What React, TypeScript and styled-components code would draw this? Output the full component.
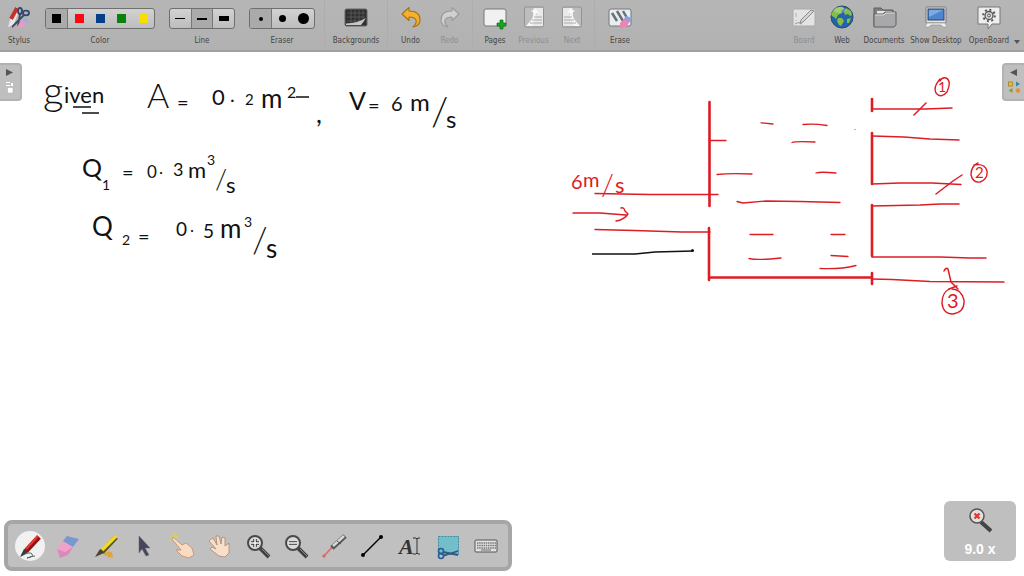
import React from 'react';
import styled, { createGlobalStyle } from 'styled-components';

const GlobalStyle = createGlobalStyle`
  *, *::before, *::after { box-sizing: border-box; }
  body { margin: 0; background: #fff; }
  button { font: inherit; color: inherit; border: 0; padding: 0; background: none; }
`;

const Page = styled.div`
  min-height: 100vh;
  display: flex;
  flex-direction: column;
  font-family: 'DejaVu Sans Condensed', 'DejaVu Sans', sans-serif;
  font-size: 8px;
  color: #454545;
`;

const Toolbar = styled.header`
  display: flex;
  height: 52px;
  background: linear-gradient(#b6b6b6, #b1b1b1);
  border-bottom: 2px solid #a0a0a0;
`;

const ToolGroup = styled.div<{ $divided?: boolean; $end?: boolean }>`
  display: flex;
  padding: 0 3px;
  margin-left: ${p => (p.$end ? 'auto' : '0')};
  border-left: ${p => (p.$divided ? '1px solid #adadad' : '0')};
`;

const Tool = styled.button<{ $width?: number }>`
  width: ${p => p.$width ?? 38}px;
  display: flex;
  flex-direction: column;
  align-items: center;
  gap: 6px;
  padding-top: 5px;
  line-height: 10px;
  white-space: nowrap;
  &:disabled { color: #8e8e8e; }
  svg { display: block; flex: none; }
`;

const Palettes = styled.div`
  display: flex;
  gap: 14px;
  padding: 8px 9px 0 7px;
`;

const Palette = styled.div`
  display: flex;
  flex-direction: column;
  align-items: center;
  gap: 7px;
  line-height: 10px;
`;

const Segments = styled.div<{ $width: number }>`
  display: flex;
  width: ${p => p.$width}px;
  height: 21px;
  border: 1px solid #6f6f6f;
  border-radius: 3px;
  overflow: hidden;
  background: linear-gradient(#d2d2d2, #bdbdbd);
`;

const Segment = styled.button<{ $on?: boolean; $line?: boolean }>`
  flex: 1;
  display: grid;
  place-items: center;
  background: ${p => (p.$on ? '#aaa' : 'transparent')};
  border-right: ${p => (p.$on || p.$line ? '1px solid #777' : '0')};
  &:last-child { border-right: 0; }
`;

const Mark = styled.span<{ $w: number; $h: number; $color?: string; $round?: boolean }>`
  width: ${p => p.$w}px;
  height: ${p => p.$h}px;
  background: ${p => p.$color ?? '#000'};
  border-radius: ${p => (p.$round ? '50%' : '0')};
`;

const MenuArrow = styled.button`
  align-self: flex-end;
  width: 8px;
  margin-bottom: 3px;
`;

const Board = styled.main`
  position: relative;
  flex: 1;
  display: flex;
  justify-content: space-between;
  align-items: flex-start;
  background: #fff;
  svg { flex: none; display: block; }
`;

const SideTab = styled.button<{ $side: 'left' | 'right' }>`
  position: absolute;
  top: 11px;
  ${p => p.$side}: 0;
  width: 22px;
  height: 38px;
  background: #bfbfbf;
  border: 2px solid #b2b2b2;
  border-${p => p.$side}: 0;
  border-radius: ${p => (p.$side === 'left' ? '0 4px 4px 0' : '4px 0 0 4px')};
  display: grid;
  place-items: center;
`;

const Footer = styled.footer`
  display: flex;
  justify-content: space-between;
  align-items: flex-end;
  padding: 0 8px 5px 4px;
`;

const Dock = styled.nav`
  display: flex;
  height: 51px;
  padding: 0 3px;
  background: #c0c0c0;
  border: 4px solid #a6a6a6;
  border-radius: 8px;
`;

const DockTool = styled.button`
  width: 38px;
  display: grid;
  place-items: center;
`;

const ZoomButton = styled.button`
  width: 72px;
  height: 60px;
  margin-bottom: 10px;
  border-radius: 6px;
  background: #bfbfbf;
  display: flex;
  flex-direction: column;
  align-items: center;
  justify-content: space-between;
  padding: 6px 0 4px;
`;

const ZoomValue = styled.span`
  font: bold 14px/16px 'Liberation Sans', sans-serif;
  color: #fff;
`;

const Ink = styled.text`
  font-family: Lato, 'Open Sans', sans-serif;
  font-weight: 400;
`;

/* Every glyph of a written line: text, x, baseline, size. */
type Glyph = [string, number, number, number];

const Written = ({ glyphs, color = '#111' }: { glyphs: Glyph[]; color?: string }) => (
  <Ink fill={color}>
    {glyphs.map(([t, x, y, size], i) => (
      <tspan key={i} x={x} y={y} fontSize={size} fontWeight={t === '/' || size > 30 ? 300 : 400}>{t}</tspan>
    ))}
  </Ink>
);

const given: Glyph[] = [['g', 43, 105, 40], ['iven', 64, 103, 22]];
const area: Glyph[] = [['A', 147, 108, 34], ['=', 177, 110, 20], ['0', 212, 105, 22], ['.', 230, 102, 20], ['2', 245, 105, 15], ['m', 261, 108, 26], ['2', 287, 98, 16], [',', 316, 123, 26]];
const speed: Glyph[] = [['V', 349, 110, 25], ['=', 368, 113, 20], ['6', 391, 111, 20], ['m', 410, 111, 24], ['/', 431, 126, 40], ['s', 446, 128, 24]];
const flowOne: Glyph[] = [['Q', 82, 177, 25], ['1', 102, 190, 14], ['=', 122, 180, 20], ['0', 147, 178, 17], ['.', 159, 174, 17], ['3', 173, 176, 18], ['m', 188, 178, 22], ['3', 207, 165, 14], ['/', 215, 189, 28], ['s', 226, 193, 22]];
const flowTwo: Glyph[] = [['Q', 92, 236, 26], ['2', 122, 245, 14], ['=', 138, 244, 20], ['0', 176, 236, 19], ['.', 190, 232, 17], ['5', 203, 238, 19], ['m', 220, 238, 26], ['3', 244, 227, 14], ['/', 252, 253, 36], ['s', 266, 258, 26]];
const inflow: Glyph[] = [['6', 571, 189, 20], ['m', 583, 187, 20], ['/', 601, 195, 30], ['s', 615, 193, 22]];

const RED = '#dd1c24';

const Notes = () => (
  <svg width="480" height="240" viewBox="0 52 480 240" role="img" aria-label="Given values">
    <Written glyphs={given} />
    <Written glyphs={area} />
    <Written glyphs={speed} />
    <Written glyphs={flowOne} />
    <Written glyphs={flowTwo} />
    <path d="M73 107H91M82 113H99M296 97L309 97" stroke="#111" strokeWidth="1.5" fill="none" />
  </svg>
);

const Diagram = () => (
  <svg width="464" height="270" viewBox="560 52 464 270" role="img" aria-label="Tank with one inlet and three outlets">
    <g stroke={RED} fill="none" strokeLinecap="round" strokeLinejoin="round">
      <path strokeWidth="2.6" d="M709.500 102V206M709 228V280M711 277.500H871M872 99V111M872 133V184M872 205V256M872 273V284" />
      <path strokeWidth="1.3" d="M709 140.500H726M717 174.500Q730 173 752 174M761 122.800L773 124M792 142.500Q796 141 815 142M803 124.500Q814 123.500 827 125.500M816 173Q820 171.500 836 173M737 201.500L743 203L766 201L800 201.500L840 202.500M750 234.500H773M749 258.500Q757 260.500 781 258M831 234.500H845M831 255.500L848 256.500M820 268.500Q840 269.500 856 265.500" />
      <path strokeWidth="1.4" d="M595 193.500L650 194.500H718M595 229.500L634 230.500L682 232H710M573 213L600 213L626 215M621 208Q624 207 625 211L628 214Q624 220 616 221" />
      <path strokeWidth="1.5" d="M872 109L925 109L952 108M872 136L904 137L930 139L959 140M872 184L900 183H932L961 184.500M872 206L920 205L940 204H959M872 257L940 257L970 258L986 258M872 279L892 279.500L930 281.500L1004 282" />
      <path strokeWidth="1.5" d="M926 103L921 108L914 115M962 175L953 181L936 194M944 271Q946 267 948 269L951 282L958 289M949 289L957 286" />
      <path strokeWidth="1.4" d="M940 79Q933 87 936 93Q941 99 947 92Q952 81 946 78Q942 77 940 81M978 163Q971 166 971 175Q973 183 980 182Q988 179 987 171Q985 163 974 165M949 289Q942 293 942 303Q943 314 953 314Q965 312 964 300Q961 289 952 289" />
    </g>
    <path d="M592 254H635L655 252L693 251" stroke="#111" strokeWidth="1.6" fill="none" />
    <circle cx="692.500" cy="250.500" r="1.500" fill="#111" />
    <circle cx="855" cy="129.500" r=".6" fill={RED} />
    <Written glyphs={inflow} color={RED} />
    <Written glyphs={[['1', 938, 92, 14]]} color={RED} />
    <Written glyphs={[['2', 975, 178, 15]]} color={RED} />
    <Written glyphs={[['3', 947, 308, 20]]} color={RED} />
  </svg>
);

const Icon = ({ children, size = 26 }: { children: React.ReactNode; size?: number }) => (
  <svg width={size} height={size === 26 ? 25 : size} viewBox={`0 0 ${size} ${size === 26 ? 25 : size}`} fill="none" aria-hidden="true">{children}</svg>
);

const StylusIcon = () => (
  <Icon>
    <path d="M12 3L5 21" stroke="#e9e9e9" strokeWidth="4" /><path d="M11 3L5 14" stroke="#c4322c" strokeWidth="4" /><path d="M5 14L3 22" stroke="#ddd" strokeWidth="2" />
    <ellipse cx="14" cy="6" rx="2" ry="3" stroke="#34466f" strokeWidth="1.800" /><ellipse cx="20" cy="8" rx="3" ry="2.300" stroke="#34466f" strokeWidth="1.800" />
    <path d="M14 9L12 21M18 10L6 22" stroke="#3e4965" strokeWidth="1.800" />
    <path d="M12 20l5-6 6 1-6 7-5 1z" fill="#e59bc4" /><path d="M16 16l2-3 5 2-2 3z" fill="#9fafe0" />
  </Icon>
);
const BackgroundsIcon = () => (
  <Icon>
    <rect x="2" y="4" width="22" height="17" rx="1.500" fill="#303030" stroke="#666" />
    <path d="M4 8H22M4 12H22M4 16H22M8 5V18M12 5V18M16 5V18M20 5V18" stroke="#636363" strokeWidth=".7" />
    <path d="M3 18.500Q15 18 23 13L18 20H3z" fill="#c8c8c8" />
  </Icon>
);
const UndoArrow = ({ flip, fill, line }: { flip?: boolean; fill: string; line: string }) => (
  <Icon>
    <path transform={flip ? 'translate(26 0) scale(-1 1)' : undefined} d="M4 9L11 2.500V6C19 6 22 10 22 15C22 18 20 21 15 22C18 19 19 17 18 15C17 12.500 15 12 11 12V15.500z" fill={fill} stroke={line} strokeWidth="1.100" strokeLinejoin="round" />
  </Icon>
);
const PagesIcon = () => (
  <Icon>
    <rect x="2" y="4" width="22" height="17" rx="2" fill="#f1f1f1" stroke="#777" />
    <path d="M18 15h3v3h3v3h-3v3h-3v-3h-3v-3h3z" fill="#18a51f" stroke="#087010" strokeWidth=".7" />
  </Icon>
);
const StepIcon = ({ next }: { next?: boolean }) => (
  <Icon>
    <g transform={next ? 'translate(26 0) scale(-1 1)' : undefined}>
      <rect x="3.500" y="2" width="19" height="20" rx="1.500" fill="#bdbdbd" stroke="#929292" />
      <path d="M12 3H22V21H7V19L12 13L16 9z" fill="#e9e9e9" />
      <path d="M5 21Q14 13 12 7L10 6L15 3.500L18 9L15 8Q15 14 11 21z" fill="#f8f8f8" />
      <path d="M13 12H21M11 15H21M9 18H21" stroke="#aaa" strokeWidth="1" />
    </g>
  </Icon>
);
const EraseIcon = () => (
  <Icon>
    <rect x="2" y="4" width="22" height="17" rx="2" fill="#e9edef" stroke="#777" />
    <path d="M5 8l5 8M10 6l6 10M16 6l4 7" stroke="#65727a" strokeWidth="2.500" />
    <path d="M13 18l5-5 6 2-5 7-6 1z" fill="#ed83b6" /><path d="M17 14l2-3 6 2-2 4z" fill="#87a4db" />
  </Icon>
);
const BoardIcon = () => (
  <Icon>
    <rect x="2" y="4" width="22" height="17" rx="1" fill="#e3e3e3" stroke="#aaa" />
    <path d="M5 8V12M5 15V16" stroke="#aaa" /><path d="M23 6L12 17L9 19L10 15L20 5z" fill="#d6d6d6" stroke="#888" /><path d="M4 19Q7 16 11 19" stroke="#999" />
  </Icon>
);
const WebIcon = () => (
  <Icon>
    <circle cx="13" cy="12" r="11" fill="#2363a8" stroke="#29496c" />
    <path d="M4 6Q8 1 14 2L15 4L12 6L13 8L9 10L7 14L5 12L3 11L2 9zM9 13L13 13L15 16L12 21L10 20L8 16zM17 3L22 6L23 10L21 11L19 9L16 10L15 7zM18 14L22 13L20 18L18 18z" fill="#85bd46" />
    <ellipse cx="11" cy="5" rx="6" ry="3" fill="#fff" opacity=".25" />
  </Icon>
);
const DocumentsIcon = () => (
  <Icon>
    <path d="M3 21V3H10L12 5H22V18z" fill="#808080" stroke="#5c5c5c" /><path d="M6 6H21V17H6z" fill="#e6e6e6" /><path d="M3 9H12L14 7H25V20L23 22H3z" fill="#a8a8aa" stroke="#616161" /><path d="M4 10H13L15 8H24" stroke="#d4d4d4" />
  </Icon>
);
const DesktopIcon = () => (
  <Icon>
    <rect x="3" y="2" width="20" height="16" rx="1" fill="#e5e5e5" stroke="#777" /><rect x="5" y="4" width="16" height="11" fill="#4d86cf" stroke="#294566" /><path d="M6 5H20L6 12z" fill="#7dabe0" />
    <path d="M2 22L4 18H22L24 22H20L18 20H8L6 22z" fill="#eee" stroke="#999" strokeWidth=".7" />
  </Icon>
);
const OpenBoardIcon = () => (
  <Icon>
    <path d="M2 2H24V19H16L12 24V19H2z" fill="#eee" stroke="#777" />
    <circle cx="13" cy="10.500" r="5.800" stroke="#555" strokeWidth="2" strokeDasharray="2 2.500" /><circle cx="13" cy="10.500" r="4" fill="#ddd" stroke="#555" strokeWidth="1.300" /><circle cx="13" cy="10.500" r="1.500" stroke="#555" />
  </Icon>
);

const Lens = ({ sign }: { sign: string }) => (
  <>
    <path d="M15 15L24 24" stroke="#414141" strokeWidth="4" /><path d="M17 16L24 23" stroke="#888" strokeWidth="1" />
    <circle cx="10" cy="10" r="7" fill="#dadada" stroke="#494949" strokeWidth="2" />
    <path d={sign} stroke="#333" strokeWidth="3.500" /><path d={sign} stroke="#fff" strokeWidth="1.500" />
  </>
);

const dockTools: { label: string; art: React.ReactNode }[] = [
  { label: 'Pen', art: <><circle cx="15" cy="15" r="15" fill="#f1f1f1" /><path d="M6 25Q15 20 17 23T12 27Q17 25 20 25" stroke="#4c6460" strokeWidth="1" /><path d="M24 6L11 20" stroke="#8e1517" strokeWidth="5" /><path d="M23 5L11 18" stroke="#eb332f" strokeWidth="2.500" /><path d="M9 18l4 3-8 5z" fill="#383838" /></> },
  { label: 'Eraser', art: <><path d="M4 18L14 5L26 8L15 23L7 27z" fill="#f0a0cb" /><path d="M10 10L14 5L26 8L20 16z" fill="#7799d0" /><path d="M4 18L12 21L20 16L15 24L7 27z" fill="#d98bb8" /></> },
  { label: 'Marker', art: <><path d="M13 24Q20 20 20 23Q14 26 22 25" stroke="#dda642" strokeWidth="2.500" /><path d="M25 6L11 21" stroke="#5f5415" strokeWidth="5" /><path d="M25 5L11 19" stroke="#f2db1f" strokeWidth="3.500" /><path d="M9 18l4 4-9 4z" fill="#49432f" /></> },
  { label: 'Select', art: <path d="M10 5L21 17L16 17L20 24L17 25L13 18L10 22z" fill="#44465a" stroke="#696b7b" strokeWidth=".5" /> },
  { label: 'Interact', art: <><path d="M7 1V11M2 6H12M3 2L11 10M11 2L3 10" stroke="#d9d457" strokeWidth="1" /><path d="M6 6L15 14L19 12L25 17L27 24L22 27L15 25L9 19L14 19L5 8z" fill="#f8dbc2" stroke="#bd8d70" strokeWidth=".8" /></> },
  { label: 'Scroll', art: <path d="M6 8L8 7L12 14L11 5L14 5L16 13L17 6L20 7L20 15L24 12L24 22L20 26L14 25L5 18L7 16L11 18L4 10z" fill="#f8dfc9" stroke="#aa8672" strokeWidth=".8" strokeLinejoin="round" /> },
  { label: 'Zoom in', art: <g transform="translate(2 2)"><Lens sign="M6 10H14M10 6V14" /></g> },
  { label: 'Zoom out', art: <g transform="translate(2 2)"><Lens sign="M6 10H14" /></g> },
  { label: 'Laser pointer', art: <><path d="M5 25L16 13" stroke="#dc6e6a" strokeWidth="1.800" /><circle cx="5" cy="25" r="1.800" fill="#de6967" /><path d="M13 17L26 5" stroke="#555" strokeWidth="5" /><path d="M14 15L25 5" stroke="#d9d9d9" strokeWidth="2.500" /><path d="M18 10L22 13" stroke="#555" /></> },
  { label: 'Line', art: <><path d="M6 24L24 6" stroke="#000" strokeWidth="1.500" /><circle cx="6" cy="24" r="2" fill="#000" /><circle cx="24" cy="6" r="2" fill="#000" /></> },
  { label: 'Text', art: <><text x="4" y="23" fontFamily="Liberation Serif, serif" fontStyle="italic" fontWeight="bold" fontSize="22" fill="#333">A</text><path d="M18 7H21L22 8L23 7H25M22 8V22M18 23H21L22 22L23 23H25" stroke="#333" /></> },
  { label: 'Capture', art: <><rect x="5.500" y="5.500" width="20" height="18" fill="#74bec9" stroke="#358ba9" strokeDasharray="2 1" /><circle cx="8" cy="20" r="2.500" stroke="#285d91" strokeWidth="1.600" /><circle cx="8" cy="25" r="2.500" stroke="#285d91" strokeWidth="1.600" /><path d="M10 21L25 24M10 25L25 20" stroke="#315a83" strokeWidth="1.800" /></> },
  { label: 'Keyboard', art: <><rect x="4" y="9" width="22" height="12" rx="1" fill="#e2e2e2" stroke="#555" /><path d="M6 12H25M6 14.500H25M6 17H25" stroke="#777" strokeWidth="1.400" strokeDasharray="1.500 .7" /><path d="M10 19H20" stroke="#666" /></> },
];

const colors = ['#000', '#fa0a10', '#063f87', '#088308', '#fbdc00'];

export default function App() {
  return (
    <Page>
      <GlobalStyle />
      <Toolbar>
        <Tool $width={38}><StylusIcon />Stylus</Tool>
        <Palettes>
          <Palette role="group" aria-label="Color">
            <Segments $width={110}>
              {colors.map((c, i) => (
                <Segment key={c} $on={i === 0} aria-label={`Color ${i + 1}`} aria-pressed={i === 0}><Mark $w={9} $h={9} $color={c} /></Segment>
              ))}
            </Segments>
            Color
          </Palette>
          <Palette role="group" aria-label="Line">
            <Segments $width={66}>
              {[1, 2, 5].map((h, i) => (
                <Segment key={h} $line $on={i === 1} aria-label={`Line ${i + 1}`} aria-pressed={i === 1}><Mark $w={10} $h={h} /></Segment>
              ))}
            </Segments>
            Line
          </Palette>
          <Palette role="group" aria-label="Eraser">
            <Segments $width={66}>
              {[4, 7, 11].map((d, i) => (
                <Segment key={d} $on={i === 0} aria-label={`Eraser ${i + 1}`} aria-pressed={i === 0}><Mark $w={d} $h={d} $round /></Segment>
              ))}
            </Segments>
            Eraser
          </Palette>
        </Palettes>
        <ToolGroup $divided><Tool $width={56}><BackgroundsIcon />Backgrounds</Tool></ToolGroup>
        <ToolGroup $divided>
          <Tool $width={39}><UndoArrow fill="#f5b02c" line="#a86f17" />Undo</Tool>
          <Tool $width={39} disabled><UndoArrow flip fill="#d0d0d0" line="#999" />Redo</Tool>
        </ToolGroup>
        <ToolGroup $divided>
          <Tool $width={38}><PagesIcon />Pages</Tool>
          <Tool $width={39} disabled><StepIcon />Previous</Tool>
          <Tool $width={38} disabled><StepIcon next />Next</Tool>
        </ToolGroup>
        <ToolGroup $divided><Tool $width={44}><EraseIcon />Erase</Tool></ToolGroup>
        <ToolGroup $end>
          <Tool disabled><BoardIcon />Board</Tool>
          <Tool><WebIcon />Web</Tool>
          <Tool $width={46}><DocumentsIcon />Documents</Tool>
          <Tool $width={58}><DesktopIcon />Show Desktop</Tool>
          <Tool $width={48}><OpenBoardIcon />OpenBoard</Tool>
          <MenuArrow aria-label="OpenBoard menu"><svg width="8" height="5" viewBox="0 0 8 5"><path d="M1 0H7L4 4z" fill="#555" /></svg></MenuArrow>
        </ToolGroup>
      </Toolbar>

      <Board>
        <Notes />
        <Diagram />
        <SideTab $side="left" aria-label="Open page list">
          <svg width="18" height="32" viewBox="0 0 18 32"><path d="M5 3L12 6.500L5 10z" fill="#555" /><path d="M5 16H9V17H5zM10 17H12V20H10zM5 19H9V20H5z" fill="#fff" /><path d="M6.500 21.500H12V27H6.500z" fill="#fff" stroke="#aaa" strokeWidth=".5" /></svg>
        </SideTab>
        <SideTab $side="right" aria-label="Open library">
          <svg width="18" height="32" viewBox="0 0 18 32"><path d="M12 3L5 6.500L12 10z" fill="#555" /><rect x="3.500" y="16" width="4" height="4" fill="#efbd25" stroke="#9d7b1b" strokeWidth=".7" /><path d="M11 15.500L15 18L11 20.500z" fill="#288daa" /><path d="M7.500 22L3.500 24.500L7.500 27z" fill="#879f2e" /><circle cx="13" cy="24.500" r="2.200" fill="#f08b2b" /></svg>
        </SideTab>
      </Board>

      <Footer>
        <Dock aria-label="Drawing tools">
          {dockTools.map(t => (
            <DockTool key={t.label} aria-label={t.label}><Icon size={30}>{t.art}</Icon></DockTool>
          ))}
        </Dock>
        <ZoomButton>
          <svg width="28" height="28" viewBox="0 0 28 28" fill="none" aria-hidden="true">
            <path d="M15 15L25 24" stroke="#444" strokeWidth="4" /><circle cx="11" cy="9" r="7" fill="#e1e1e1" stroke="#555" strokeWidth="1.500" /><path d="M8.500 6.500L13.500 11.500M13.500 6.500L8.500 11.500" stroke="#e8382e" strokeWidth="2.400" />
          </svg>
          <ZoomValue>9.0 x</ZoomValue>
        </ZoomButton>
      </Footer>
    </Page>
  );
}
